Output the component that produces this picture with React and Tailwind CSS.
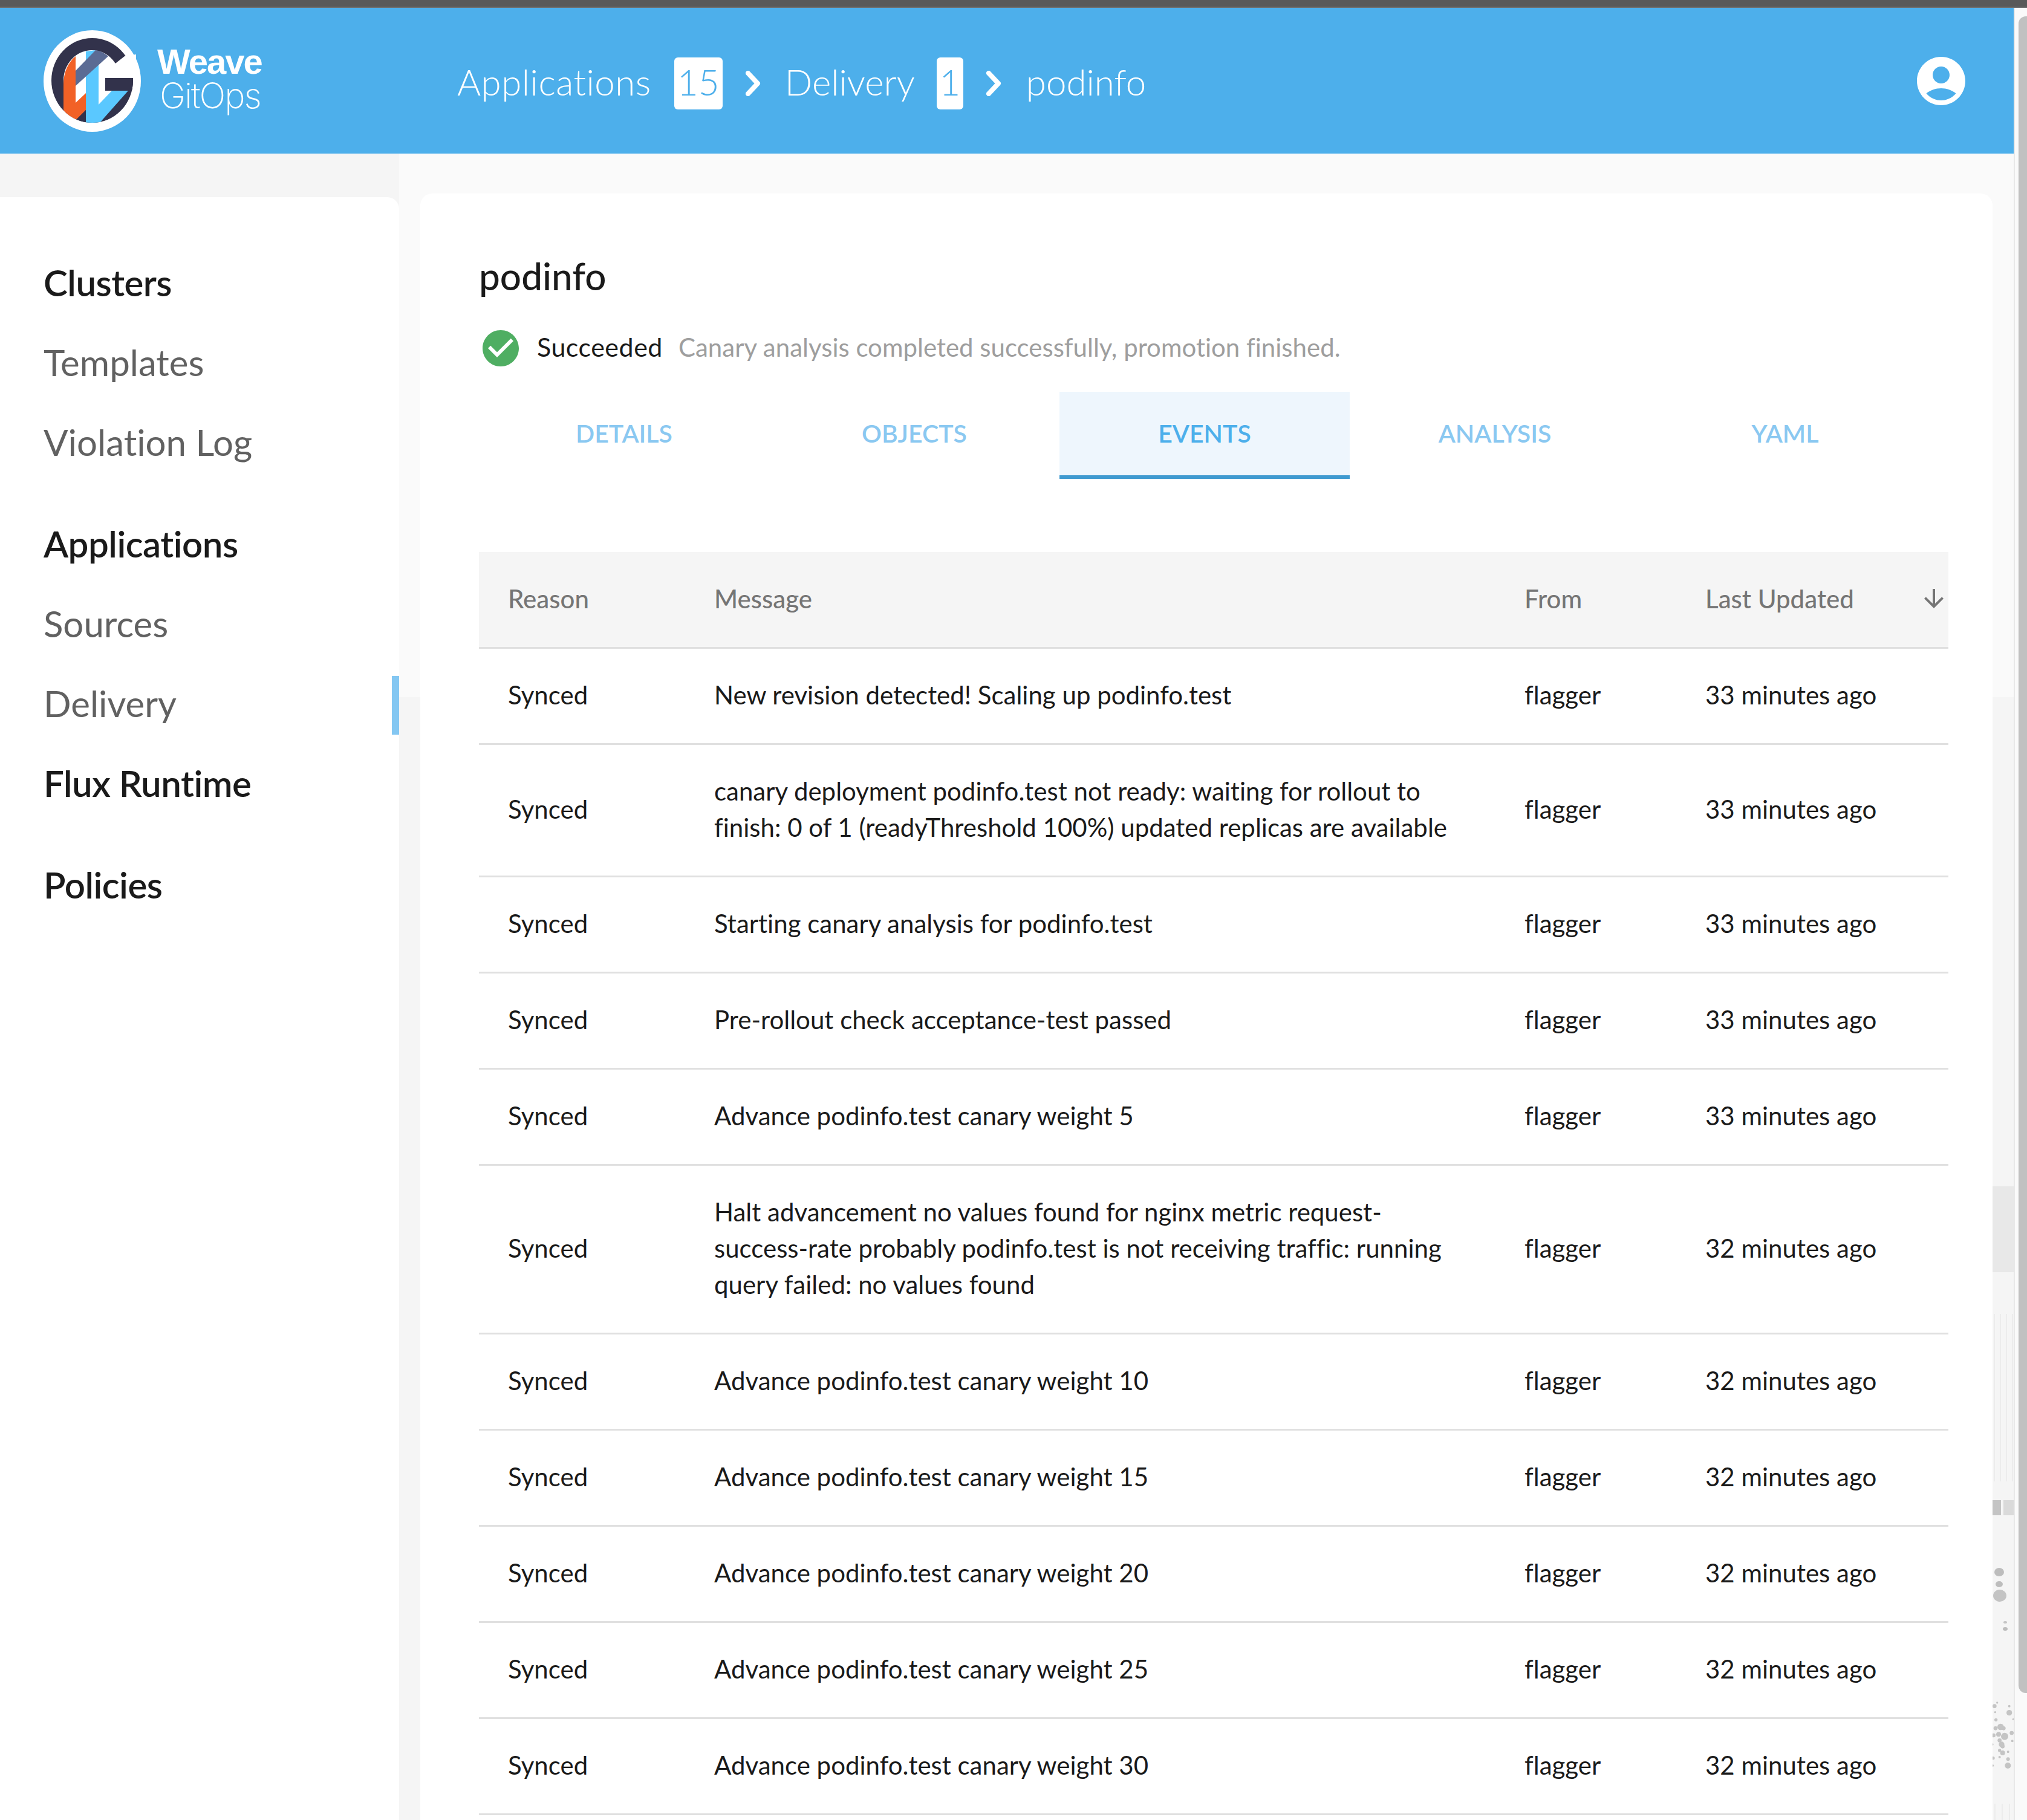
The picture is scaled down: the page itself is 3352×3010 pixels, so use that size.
const rows = [
  [["New revision detected! Scaling up podinfo.test"], "33 minutes ago"],
  [["canary deployment podinfo.test not ready: waiting for rollout to", "finish: 0 of 1 (readyThreshold 100%) updated replicas are available"], "33 minutes ago"],
  [["Starting canary analysis for podinfo.test"], "33 minutes ago"],
  [["Pre-rollout check acceptance-test passed"], "33 minutes ago"],
  [["Advance podinfo.test canary weight 5"], "33 minutes ago"],
  [["Halt advancement no values found for nginx metric request-", "success-rate probably podinfo.test is not receiving traffic: running", "query failed: no values found"], "32 minutes ago"],
  [["Advance podinfo.test canary weight 10"], "32 minutes ago"],
  [["Advance podinfo.test canary weight 15"], "32 minutes ago"],
  [["Advance podinfo.test canary weight 20"], "32 minutes ago"],
  [["Advance podinfo.test canary weight 25"], "32 minutes ago"],
  [["Advance podinfo.test canary weight 30"], "32 minutes ago"],
];

const blobs = [
  [55,125,10],[68,108,5],[58,155,5],[128,125,6],[128,158,14],[62,193,8],[85,228,16],[60,235,10],[100,235,10],
  [50,270,10],[75,265,12],[105,275,18],[80,295,10],[90,315,14],[95,325,10],[80,345,8],[95,357,12],[122,352,6],
  [48,383,8],[80,378,6],[122,388,9],[121,420,15],[47,420,5],[140,258,10],[143,298,6],[45,315,5],[148,190,5],
];

function Logo() {
  return (
    <svg viewBox="72 50 161 168" className="w-[161px] h-[168px] shrink-0">
      <defs>
        <clipPath id="outer"><ellipse cx="152.5" cy="133" rx="67.5" ry="70" /></clipPath>
      </defs>
      <ellipse cx="152.5" cy="134" rx="80.5" ry="84" fill="#fff" />
      <ellipse cx="152.5" cy="133" rx="67.5" ry="70" fill="#32324b" />
      <ellipse cx="152" cy="133" rx="47" ry="50" fill="#fff" />
      <polygon points="192,104 206,93 225,90 225,129 152,129" fill="#fff" />
      <g clipPath="url(#outer)">
        <path d="M125 93 C112 104 105 120 105 140 L105 182 L118 200 L127 197 L142 182 L142 154 L125 170 Z" fill="#f26126" />
        <polygon points="127,197 142,182 142,205 120,205" fill="#32324b" />
        <polygon points="142,85 158,83 142,103" fill="#5ac8ff" />
        <polygon points="142,103 163,84 163,173 185,150 212,150 165,203 142,205" fill="#5ac8ff" />
        <path d="M125 117 L158 83 C166 84 173 88 179 93 L125 142 Z" fill="#5b6b94" />
        <rect x="174" y="129" width="50" height="21" fill="#32324b" />
      </g>
    </svg>
  );
}

function Chevron() {
  return (
    <svg viewBox="0 0 25 42" className="w-[25px] h-[42px] shrink-0 block">
      <path d="M4 4 L20 21 L4 38" fill="none" stroke="#fff" strokeWidth="8" strokeLinejoin="round" strokeLinecap="round" />
    </svg>
  );
}

function NavItem({ label, bold, active }) {
  return (
    <div className="h-[132px] flex items-center justify-between">
      <span className={bold ? "text-[60px] font-semibold tracking-[-0.5px] text-[#1a1a1a]" : "text-[60px] text-[#616161]"}>{label}</span>
      {active && <div className="w-[12px] h-[97px] mt-[7px] bg-[#84c7f2]" />}
    </div>
  );
}

function Minimap() {
  return (
    <svg viewBox="0 254 35 2756" className="w-[35px] h-[2756px] block">
      <rect x="0" y="1962" width="36" height="142" fill="#e8e8e8" />
      {[2, 12, 22, 32].map((x) => <rect key={x} x={x} y="2173" width="2" height="277" fill="#ececec" />)}
      <rect x="0" y="2481" width="14" height="25" fill="#c4c4c4" />
      <rect x="18" y="2481" width="18" height="25" fill="#dadada" />
      <ellipse cx="11" cy="2600" rx="8" ry="7" fill="#bdbdbd" />
      <ellipse cx="11" cy="2620" rx="6" ry="5" fill="#bdbdbd" />
      <ellipse cx="12" cy="2639" rx="11" ry="10" fill="#c4c4c4" />
      <ellipse cx="21" cy="2683" rx="3" ry="2" fill="#c4c4c4" />
      <ellipse cx="21" cy="2694" rx="4" ry="3" fill="#bdbdbd" />
      <g transform="translate(-15 2780) scale(0.3333)" fill="#c4c4c4">
        {blobs.map(([x, y, r], i) => <circle key={i} cx={x} cy={y} r={r} />)}
      </g>
      {[3, 15, 27].map((x) => <rect key={x} x={x} y="2983" width="2" height="27" fill="#ececec" />)}
    </svg>
  );
}

export default function App() {
  return (
    <div className="w-[3352px] h-[3010px] overflow-hidden flex flex-col font-[Lato,sans-serif] [font-variant-ligatures:none] bg-[#fafafa]">
      <div className="h-[13px] shrink-0 bg-[#595959] border-b-[2px] border-[#6f6f6f]" />
      <div className="flex-1 flex min-h-0">
        <div className="w-[3330px] flex flex-col">
          <header className="h-[241px] shrink-0 bg-[#4dafeb] flex items-center pl-[72px] pr-[72px] text-white">
            <Logo />
            <div className="flex flex-col mb-[8px] ml-[27px] w-[180px] font-[Liberation_Sans,sans-serif]">
              <span className="text-[58px] leading-[56px] font-bold tracking-[-2px]">Weave</span>
              <span className="text-[58px] leading-[56px] font-[Inter,sans-serif] font-extralight tracking-[-2px] ml-[4px]">GitOps</span>
            </div>
            <nav className="flex items-center mt-[9px] ml-[316px] text-[60px] font-light">
              <span className="mb-[6px] tracking-[0.5px]">Applications</span>
              <span className="ml-[38px] pb-[6px] w-[80px] h-[86px] rounded-[6px] bg-white text-[#4dafeb] flex items-center justify-center">15</span>
              <span className="ml-[38px]"><Chevron /></span>
              <span className="mb-[6px] ml-[40px]">Delivery</span>
              <span className="ml-[36px] pb-[6px] w-[44px] h-[86px] rounded-[6px] bg-white text-[#4dafeb] flex items-center justify-center">1</span>
              <span className="ml-[38px]"><Chevron /></span>
              <span className="mb-[6px] ml-[41px]">podinfo</span>
            </nav>
            <svg viewBox="0 0 24 24" className="w-[96px] h-[96px] ml-auto" fill="#fff">
              <path d="M12 2C6.48 2 2 6.48 2 12s4.48 10 10 10 10-4.48 10-10S17.52 2 12 2zm0 4c1.93 0 3.5 1.57 3.5 3.5S13.93 13 12 13s-3.5-1.57-3.5-3.5S10.07 6 12 6zm0 14c-2.03 0-4.43-.82-6.14-2.88C7.55 15.8 9.68 15 12 15s4.45.8 6.14 2.12C16.43 19.18 14.03 20 12 20z" />
            </svg>
          </header>
          <div className="flex-1 flex min-h-0">
            <aside className="w-[660px] shrink-0 bg-[#f5f5f5] pt-[72px]">
              <div className="h-full bg-white rounded-tr-[20px] pt-[75px] pl-[72px]">
                <NavItem label="Clusters" bold />
                <NavItem label="Templates" />
                <NavItem label="Violation Log" />
                <div className="h-[36px]" />
                <NavItem label="Applications" bold />
                <NavItem label="Sources" />
                <NavItem label="Delivery" active />
                <NavItem label="Flux Runtime" bold />
                <div className="h-[36px]" />
                <NavItem label="Policies" bold />
              </div>
            </aside>
            <main className="flex-1 flex min-w-0 pt-[66px] pl-[35px] bg-[linear-gradient(#fafafa_899px,#f5f5f5_899px)]">
              <div className="flex-1 bg-white rounded-t-[20px] pt-[98px] pl-[97px] pr-[72px]">
                <h1 className="h-[76px] text-[62px] leading-[76px] font-medium text-[#1a1a1a]">podinfo</h1>
                <div className="mt-[52px] h-[60px] flex items-center pl-[6px] text-[43px]">
                  <svg viewBox="0 0 24 24" className="w-[72px] h-[72px] -ml-[6px] shrink-0" fill="#4fae62">
                    <path d="M12 2C6.48 2 2 6.48 2 12s4.48 10 10 10 10-4.48 10-10S17.52 2 12 2zm-2 15l-5-5 1.41-1.41L10 14.17l7.59-7.59L19 8l-9 9z" />
                  </svg>
                  <span className="ml-[24px] mb-[4px] text-[#1a1a1a] tracking-[0.5px]">Succeeded</span>
                  <span className="ml-[26px] mb-[4px] text-[42px] text-[#9e9e9e]">Canary analysis completed successfully, promotion finished.</span>
                </div>
                <div className="mt-[42px] flex h-[144px] text-[41px] font-semibold">
                  {["DETAILS", "OBJECTS", "EVENTS", "ANALYSIS", "YAML"].map((t) => (
                    <div key={t} className={t === "EVENTS" ? "w-[480px] flex items-center justify-center bg-[#eef6fd] text-[#4dafeb] border-b-[6px] border-[#3f9ad0]" : "w-[480px] flex items-center justify-center text-[#8ac8f1] border-b-[6px] border-transparent"}>
                      {t}
                    </div>
                  ))}
                </div>
                <table className="mt-[121px] w-[2430px] table-fixed border-separate border-spacing-0 text-[42px] leading-[60px] text-[#1a1a1a]">
                  <colgroup>
                    <col className="w-[341px]" />
                    <col className="w-[1340px]" />
                    <col className="w-[299px]" />
                    <col className="w-[450px]" />
                  </colgroup>
                  <thead>
                    <tr className="bg-[#f5f5f5] text-[#757575] text-left">
                      <th className="h-[160px] pl-[48px] pb-[4px] border-b-[3px] border-[#e0e0e0] font-medium">Reason</th>
                      <th className="pl-[48px] pb-[4px] border-b-[3px] border-[#e0e0e0] font-medium">Message</th>
                      <th className="pl-[48px] pb-[4px] border-b-[3px] border-[#e0e0e0] font-medium">From</th>
                      <th className="pl-[48px] pb-[4px] border-b-[3px] border-[#e0e0e0] font-medium">
                        <div className="flex items-center justify-between">
                          <span>Last Updated</span>
                          <svg viewBox="0 0 24 24" className="w-[48px] h-[48px] shrink-0" fill="#757575">
                            <path d="M20 12l-1.41-1.41L13 16.17V4h-2v12.17l-5.58-5.6L4 12l8 8 8-8z" />
                          </svg>
                        </div>
                      </th>
                    </tr>
                  </thead>
                  <tbody>
                    {rows.map(([msg, time], i) => (
                      <tr key={i}>
                        <td className="pt-[46px] pb-[50px] pl-[48px] border-b-[3px] border-[#e0e0e0]">Synced</td>
                        <td className="pt-[46px] pb-[50px] pl-[48px] border-b-[3px] border-[#e0e0e0] whitespace-nowrap">
                          {msg.map((l, j) => <div key={j}>{l}</div>)}
                        </td>
                        <td className="pt-[46px] pb-[50px] pl-[48px] border-b-[3px] border-[#e0e0e0]">flagger</td>
                        <td className="pt-[46px] pb-[50px] pl-[48px] border-b-[3px] border-[#e0e0e0]">{time}</td>
                      </tr>
                    ))}
                  </tbody>
                </table>
              </div>
              <div className="w-[35px] shrink-0 -mt-[66px] h-[2756px]"><Minimap /></div>
            </main>
          </div>
        </div>
        <div className="w-[22px] shrink-0 bg-[#fafafa] border-l-[2px] border-[#e8e8e8] pl-[6px] pt-[14px]">
          <div className="h-[2773px] bg-[#c1c1c1] rounded-l-[12px]" />
        </div>
      </div>
    </div>
  );
}
